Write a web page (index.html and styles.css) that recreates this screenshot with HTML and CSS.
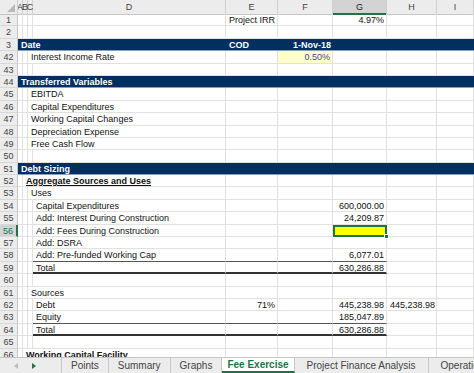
FILE: index.html
```html
<!DOCTYPE html>
<html lang="en">
<head>
  <meta charset="UTF-8">
  <title>Fee Exercise</title>
  <link rel="stylesheet" href="styles.css">
</head>
<body>

  <div class="sheet">
    <div class="row head">
      <div class="corner"><span class="tri"></span></div>
      <div class="narrow">A</div><div class="narrow">B</div><div class="narrow">C</div>
      <div>D</div><div>E</div><div>F</div>
      <div class="sel">G</div><div>H</div><div>I</div>
    </div>

    <div class="row">
      <div class="rh">1</div><div></div><div></div><div></div><div></div>
      <div class="t">Project IRR</div><div></div><div class="t num">4.97%</div><div></div><div></div>
    </div>
    <div class="row">
      <div class="rh">2</div><div></div><div></div><div></div><div></div><div></div><div></div><div></div><div></div><div></div>
    </div>
    <div class="row band">
      <div class="rh">3</div>
      <div class="t span4">Date</div>
      <div class="t">COD</div><div class="t num">1-Nov-18</div><div></div><div></div><div></div>
    </div>
    <div class="row">
      <div class="rh">42</div><div></div><div></div>
      <div class="t span2">Interest Income Rate</div>
      <div></div><div class="t num input">0.50%</div><div></div><div></div><div></div>
    </div>
    <div class="row">
      <div class="rh">43</div><div></div><div></div><div></div><div></div><div></div><div></div><div></div><div></div><div></div>
    </div>
    <div class="row band">
      <div class="rh">44</div>
      <div class="t span4">Transferred Variables</div>
      <div></div><div></div><div></div><div></div><div></div>
    </div>
    <div class="row">
      <div class="rh">45</div><div></div><div></div>
      <div class="t span2">EBITDA</div><div></div><div></div><div></div><div></div><div></div>
    </div>
    <div class="row">
      <div class="rh">46</div><div></div><div></div>
      <div class="t span2">Capital Expenditures</div><div></div><div></div><div></div><div></div><div></div>
    </div>
    <div class="row">
      <div class="rh">47</div><div></div><div></div>
      <div class="t span2">Working Capital Changes</div><div></div><div></div><div></div><div></div><div></div>
    </div>
    <div class="row">
      <div class="rh">48</div><div></div><div></div>
      <div class="t span2">Depreciation Expense</div><div></div><div></div><div></div><div></div><div></div>
    </div>
    <div class="row">
      <div class="rh">49</div><div></div><div></div>
      <div class="t span2">Free Cash Flow</div><div></div><div></div><div></div><div></div><div></div>
    </div>
    <div class="row">
      <div class="rh">50</div><div></div><div></div><div></div><div></div><div></div><div></div><div></div><div></div><div></div>
    </div>
    <div class="row band">
      <div class="rh">51</div>
      <div class="t span4">Debt Sizing</div>
      <div></div><div></div><div></div><div></div><div></div>
    </div>
    <div class="row">
      <div class="rh">52</div><div></div>
      <div class="t span3 title">Aggregate Sources and Uses</div><div></div><div></div><div></div><div></div><div></div>
    </div>
    <div class="row">
      <div class="rh">53</div><div></div><div></div>
      <div class="t span2">Uses</div><div></div><div></div><div></div><div></div><div></div>
    </div>
    <div class="row">
      <div class="rh">54</div><div></div><div></div><div></div>
      <div class="t">Capital Expenditures</div><div></div><div></div><div class="t num">600,000.00</div><div></div><div></div>
    </div>
    <div class="row">
      <div class="rh">55</div><div></div><div></div><div></div>
      <div class="t">Add: Interest During Construction</div><div></div><div></div><div class="t num">24,209.87</div><div></div><div></div>
    </div>
    <div class="row">
      <div class="rh active">56</div><div></div><div></div><div></div>
      <div class="t">Add: Fees During Construction</div><div></div><div></div><div class="cursor"><span class="handle"></span></div><div></div><div></div>
    </div>
    <div class="row">
      <div class="rh">57</div><div></div><div></div><div></div>
      <div class="t">Add: DSRA</div><div></div><div></div><div></div><div></div><div></div>
    </div>
    <div class="row">
      <div class="rh">58</div><div></div><div></div><div></div>
      <div class="t line">Add: Pre-funded Working Cap</div><div class="line"></div><div class="line"></div><div class="t num line">6,077.01</div><div></div><div></div>
    </div>
    <div class="row">
      <div class="rh">59</div><div></div><div></div><div></div>
      <div class="t total">Total</div><div class="total"></div><div class="total"></div><div class="t num total">630,286.88</div><div></div><div></div>
    </div>
    <div class="row">
      <div class="rh">60</div><div></div><div></div><div></div><div></div><div></div><div></div><div></div><div></div><div></div>
    </div>
    <div class="row">
      <div class="rh">61</div><div></div><div></div>
      <div class="t span2">Sources</div><div></div><div></div><div></div><div></div><div></div>
    </div>
    <div class="row">
      <div class="rh">62</div><div></div><div></div><div></div>
      <div class="t">Debt</div><div class="t num">71%</div><div></div><div class="t num">445,238.98</div><div class="t num">445,238.98</div><div></div>
    </div>
    <div class="row">
      <div class="rh">63</div><div></div><div></div><div></div>
      <div class="t line">Equity</div><div class="line"></div><div class="line"></div><div class="t num line">185,047.89</div><div></div><div></div>
    </div>
    <div class="row">
      <div class="rh">64</div><div></div><div></div><div></div>
      <div class="t total">Total</div><div class="total"></div><div class="total"></div><div class="t num total">630,286.88</div><div></div><div></div>
    </div>
    <div class="row">
      <div class="rh">65</div><div></div><div></div><div></div><div></div><div></div><div></div><div></div><div></div><div></div>
    </div>
    <div class="row">
      <div class="rh">66</div><div></div>
      <div class="t span3 title">Working Capital Facility</div><div></div><div></div><div></div><div></div><div></div>
    </div>
  </div>

  <div class="tabs">
    <div class="nav">
      <span class="arrow prev"></span>
      <span class="arrow next"></span>
    </div>
    <div class="tab">Points</div>
    <div class="tab">Summary</div>
    <div class="tab">Graphs</div>
    <div class="tab current">Fee Exercise</div>
    <div class="tab">Project Finance Analysis</div>
    <div class="tab">Operations</div>
  </div>

</body>
</html>
```

FILE: styles.css
```css
* {
  box-sizing: border-box;
}

body {
  margin: 0;
  height: 100vh;
  display: flex;
  flex-direction: column;
  overflow: hidden;
  font-family: "Liberation Sans", Arial, sans-serif;
  font-size: 9px;
  color: #111;
  background-color: #fff;
}

.sheet {
  flex: 1;
  overflow: hidden;
}

.row {
  display: grid;
  grid-template-columns: 18px 5px 5px 5px 193px 52px 55px 54px 50px 1fr;
  height: 12.4px;
}

.row > div {
  border-right: 1px solid #e1e1e1;
  border-bottom: 1px solid #e1e1e1;
  white-space: nowrap;
  overflow: hidden;
  line-height: 13px;
}

.t {
  padding: 0 2px 0 3px;
}

.num {
  text-align: right;
}

.span2 { grid-column: span 2; }
.span3 { grid-column: span 3; }
.span4 { grid-column: span 4; }

/* column letters */
.row.head {
  height: 14px;
}

.row.head > div {
  background-color: #ececec;
  border-right: 1px solid #d0d0d0;
  border-bottom: 1px solid #c6c6c6;
  color: #444;
  text-align: center;
  line-height: 14px;
}

.row.head > div.narrow {
  overflow: visible;
  display: flex;
  justify-content: center;
}

.row.head > div.sel {
  background-color: #d3d3d3;
  border-bottom: 2px solid #217346;
  color: #222;
}

.corner {
  position: relative;
}

.tri {
  position: absolute;
  right: 2px;
  bottom: 2px;
  border-left: 8px solid transparent;
  border-bottom: 8px solid #b9b9b9;
}

/* row numbers */
.row > .rh {
  background-color: #ececec;
  border-right: 1px solid #c6c6c6;
  border-bottom: 1px solid #d8d8d8;
  color: #444;
  text-align: center;
}

.row > .rh.active {
  color: #217346;
  background-color: #d3d3d3;
  border-right: 2px solid #217346;
}

/* dark section bars */
.band > div:not(.rh) {
  background-color: #002f60;
  border-right: none;
  border-bottom: 1px solid #8aa0b8;
  color: #fff;
  font-weight: bold;
}

.title {
  font-weight: bold;
  text-decoration: underline;
}

.row > .input {
  background-color: #ffffcc;
  color: #3f3f9a;
}

.row > .line {
  border-bottom: 1px solid #555;
}

.row > .total {
  border-bottom: 2px solid #333;
}

.row > .cursor {
  position: relative;
  background-color: #ffff00;
  border: 2px solid #217346;
  overflow: visible;
}

.handle {
  position: absolute;
  right: -4px;
  bottom: -4px;
  width: 5px;
  height: 5px;
  background-color: #217346;
  border: 1px solid #fff;
}

/* sheet tabs */
.tabs {
  height: 16px;
  display: flex;
  align-items: stretch;
  background-color: #ececec;
  border-top: 1px solid #c6c6c6;
  font-size: 10px;
  color: #444;
  overflow: hidden;
  white-space: nowrap;
}

.nav {
  width: 62px;
  flex-shrink: 0;
  display: flex;
  align-items: center;
  gap: 14px;
  padding-left: 14px;
  border-right: 1px solid #c6c6c6;
}

.arrow {
  width: 0;
  height: 0;
  border-top: 3px solid transparent;
  border-bottom: 3px solid transparent;
}

.arrow.prev {
  border-right: 4px solid #bdbdbd;
}

.arrow.next {
  border-left: 4px solid #217346;
}

.tab {
  padding: 0 9px;
  line-height: 15px;
  border-right: 1px solid #c6c6c6;
  flex-shrink: 0;
}

.tab.current {
  padding: 0 5px;
  background-color: #fff;
  color: #217346;
  font-weight: bold;
  margin-top: -1px;
  border-bottom: 2px solid #217346;
}

.tab.current ~ .tab {
  padding: 0 12px;
}
```
